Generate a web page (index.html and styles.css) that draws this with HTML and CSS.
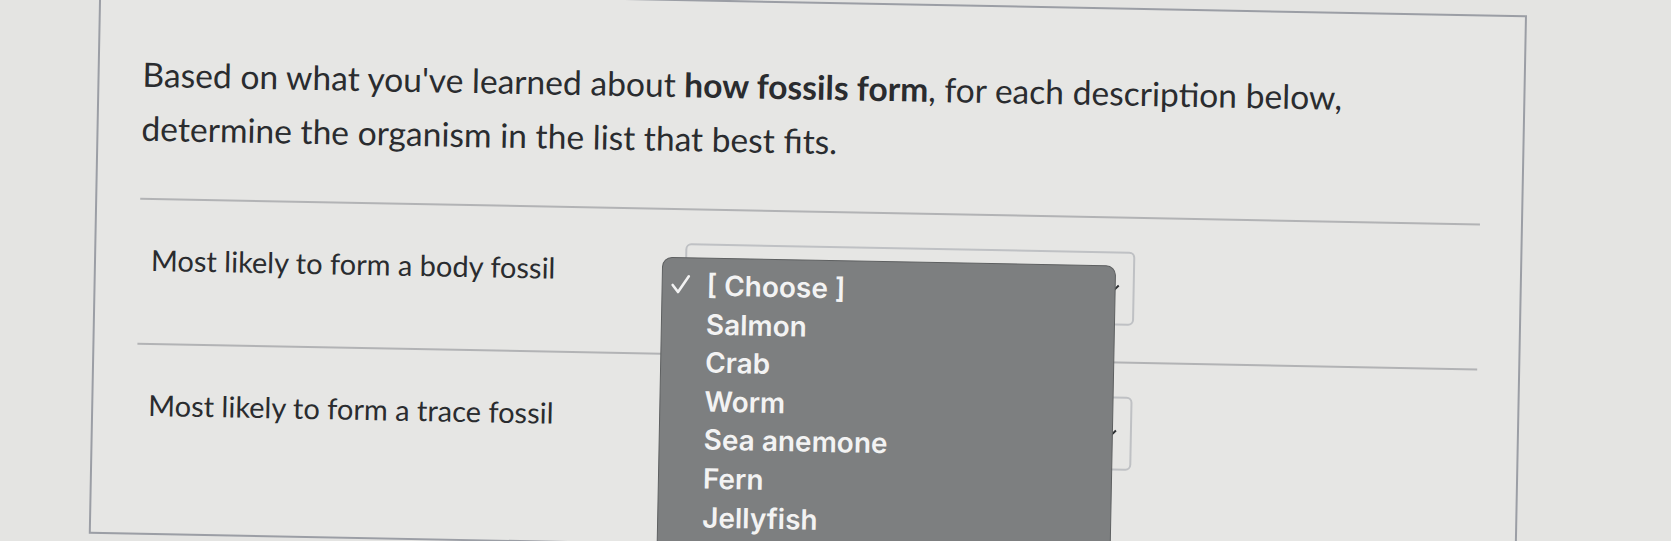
FILE: index.html
```html
<!DOCTYPE html>
<html lang="en">
<head>
<meta charset="utf-8">
<title>Quiz question</title>
<link rel="stylesheet" href="styles.css">
</head>
<body>
<div class="page">
  <div class="panel">
    <div class="content">
      <p class="question">Based on what you've learned about <strong>how fossils form</strong>, for each description below, determine the organism in the list that best fits.</p>
      <div class="rule rule-top"></div>
      <div class="row">
        <div class="label">Most likely to form a body fossil</div>
        <div class="select">
          <svg class="chev" width="16" height="10" viewBox="0 0 16 10"><path d="M2 2 L8 8 L14 2" fill="none" stroke="#2e3033" stroke-width="2"/></svg>
        </div>
      </div>
      <div class="rule rule-mid"></div>
      <div class="row">
        <div class="label">Most likely to form a trace fossil</div>
        <div class="select">
          <svg class="chev" width="16" height="10" viewBox="0 0 16 10"><path d="M2 2 L8 8 L14 2" fill="none" stroke="#2e3033" stroke-width="2"/></svg>
        </div>
      </div>
    </div>
  </div>
  <ul class="menu">
    <li class="item"><svg class="check" width="22" height="22" viewBox="0 0 22 22"><path d="M3 12 L8.5 19 L19 3" fill="none" stroke="#f2f2f2" stroke-width="2.6" stroke-linecap="round" stroke-linejoin="round"/></svg>[ Choose ]</li>
    <li class="item">Salmon</li>
    <li class="item">Crab</li>
    <li class="item">Worm</li>
    <li class="item">Sea anemone</li>
    <li class="item">Fern</li>
    <li class="item">Jellyfish</li>
  </ul>
</div>
</body>
</html>
```
FILE: styles.css
```css
html, body {
  margin: 0;
  padding: 0;
  background: #e4e4e2;
  overflow: hidden;
}
.page {
  display: flow-root;
  position: relative;
  width: 1671px;
  height: 541px;
  transform: rotate(1.1deg);
  transform-origin: 0 0;
  font-family: Lato, "Noto Sans", sans-serif;
  color: #2a2c2f;
}
.panel {
  box-sizing: border-box;
  margin-left: 99px;
  margin-top: -14px;
  width: 1428px;
  height: 546px;
  border: 2px solid #9b9ea5;
  background: #e6e6e4;
}
.content {
  margin: 0 41px 0 43px;
  padding-top: 56px;
}
.question {
  margin: 0;
  max-width: 1250px;
  font-size: 33.6px;
  line-height: 54px;
}
.question strong {
  font-weight: 700;
}
.rule {
  height: 2px;
  background: #b2b3b5;
}
.rule-top {
  margin-top: 43px;
}
.rule-mid {
  margin-top: 36px;
}
.row {
  display: flex;
  padding-top: 33px;
  padding-left: 12px;
}
.label {
  width: 534px;
  margin-top: 9px;
  font-size: 29px;
  line-height: 36px;
}
.select {
  box-sizing: border-box;
  width: 450px;
  height: 74px;
  border: 2px solid #bfc1c4;
  border-radius: 6px;
  display: flex;
  align-items: center;
  justify-content: flex-end;
  padding-right: 12px;
}
.menu {
  position: absolute;
  left: 667px;
  top: 244px;
  width: 454px;
  height: 330px;
  box-sizing: border-box;
  margin: 0;
  padding: 8px 0 0 44px;
  list-style: none;
  background: #7d7f80;
  border: 1px solid #5e6061;
  border-radius: 10px;
  font-family: Inter, "Liberation Sans", sans-serif;
  font-weight: 600;
  font-size: 28px;
  line-height: 38.6px;
  color: #f3f3f3;
}
.item {
  position: relative;
}
.check {
  position: absolute;
  left: -37px;
  top: 7px;
}
```
